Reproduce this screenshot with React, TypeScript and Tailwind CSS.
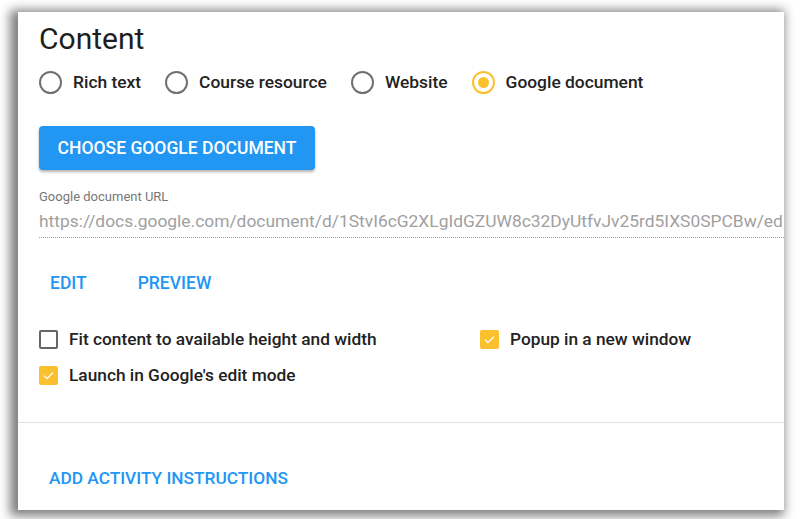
import React from 'react';

const font = { fontFamily: 'Roboto, "Noto Sans", sans-serif' };

function Radio({ label, checked = false }: { label: string; checked?: boolean }) {
  return (
    <label className="flex items-center gap-[11px]">
      <span
        className={`flex h-[23px] w-[23px] items-center justify-center rounded-full border-[2.5px] ${
          checked ? 'border-[#fbc02d]' : 'border-[#707070]'
        }`}
      >
        {checked && <span className="h-[11px] w-[11px] rounded-full bg-[#fbc02d]" />}
      </span>
      <span className="text-[17.4px] font-medium leading-6 text-[#222]">{label}</span>
    </label>
  );
}

function Checkbox({ label, checked = false }: { label: string; checked?: boolean }) {
  return (
    <label className="flex items-center gap-[11px]">
      {checked ? (
        <span className="flex h-[19px] w-[19px] items-center justify-center rounded-[2px] bg-[#fbc02d]">
          <svg viewBox="0 0 24 24" className="h-[15px] w-[15px]" fill="none" stroke="white" strokeWidth="2.2">
            <path d="M5 12.5l4.5 4.5L19 7.5" />
          </svg>
        </span>
      ) : (
        <span className="h-[19px] w-[19px] rounded-[2px] border-2 border-[#666]" />
      )}
      <span className="text-[17.3px] font-medium leading-6 text-[#222]">{label}</span>
    </label>
  );
}

export default function App() {
  return (
    <div className="h-[519px] w-[801px] bg-white pl-[18px] pt-[12px]" style={font}>
      <div className="flex h-[498px] w-[766px] flex-col overflow-hidden bg-white shadow-[-4px_2px_10px_4px_rgba(0,0,0,0.5)]">
        <div className="pl-[21px]">
          <h2 className="pt-[10px] text-[30px] leading-[34px] text-[#1e1e1e]">Content</h2>

          <div className="mt-[14px] flex items-center gap-[24px]">
            <Radio label="Rich text" />
            <Radio label="Course resource" />
            <Radio label="Website" />
            <Radio label="Google document" checked />
          </div>

          <button className="mt-[32px] h-[44px] w-[276px] rounded-[4px] bg-[#2196f3] text-[17.5px] font-medium uppercase text-white shadow-[0_2px_3px_rgba(0,0,0,0.3)]">
            Choose Google document
          </button>

          <p className="mt-[19px] text-[13px] leading-4 text-[#777]">Google document URL</p>
          <div className="mt-[4px] border-b border-dotted border-[#9e9e9e] pb-[4px]">
            <p className="whitespace-nowrap text-[17.4px] leading-6 text-[#a0a0a0]">
              https://docs.google.com/document/d/1StvI6cG2XLgIdGZUW8c32DyUtfvJv25rd5IXS0SPCBw/edit
            </p>
          </div>

          <div className="mt-[27px] flex h-[36px] items-center gap-[51px] pl-[11px]">
            <span className="text-[17.5px] font-medium uppercase text-[#2196f3]">Edit</span>
            <span className="text-[17.5px] font-medium uppercase text-[#2196f3]">Preview</span>
          </div>

          <div className="mt-[26px] grid grid-cols-[441px_1fr] gap-y-[12px]">
            <Checkbox label="Fit content to available height and width" />
            <Checkbox label="Popup in a new window" checked />
            <Checkbox label="Launch in Google's edit mode" checked />
          </div>
        </div>

        <div className="mt-[35px] border-t border-[#e0e0e0]" />

        <p className="mt-[43px] pl-[31px] text-[17.3px] font-medium uppercase leading-6 text-[#2196f3]">
          Add activity instructions
        </p>
      </div>
    </div>
  );
}
